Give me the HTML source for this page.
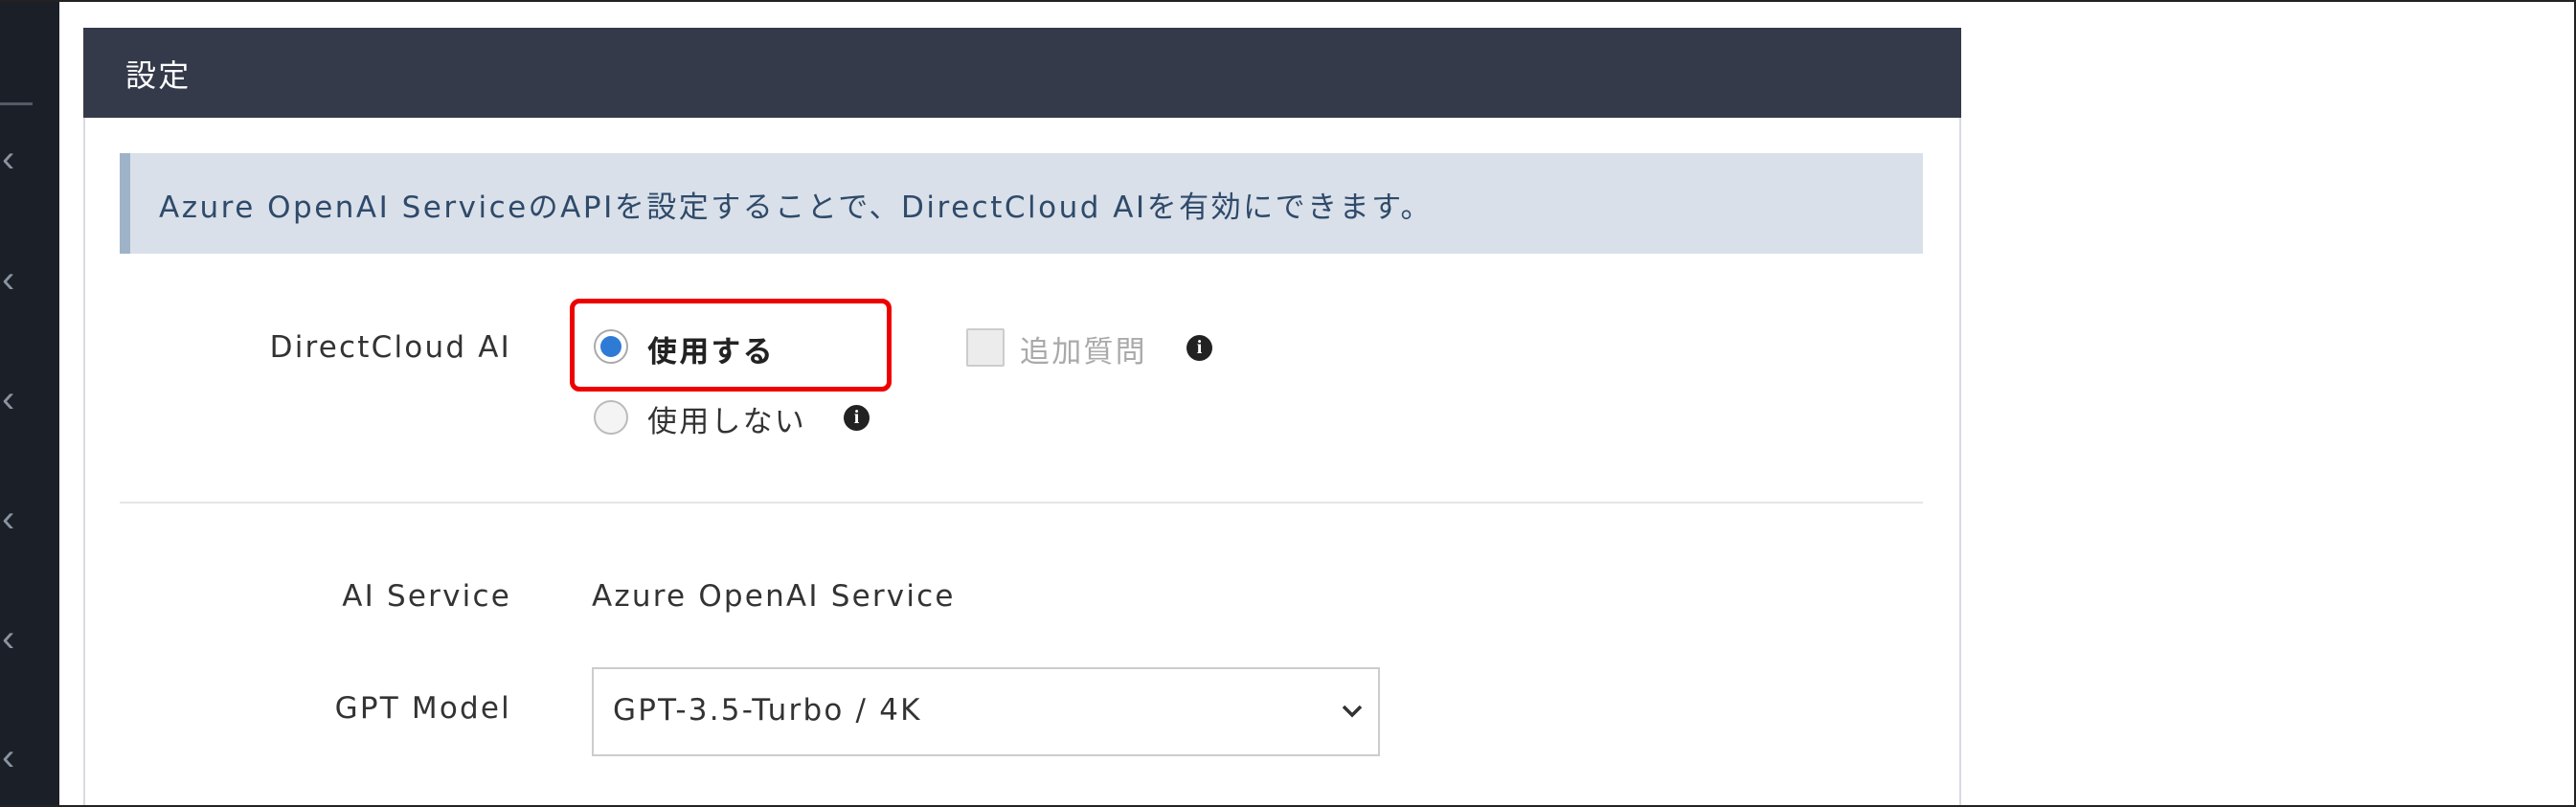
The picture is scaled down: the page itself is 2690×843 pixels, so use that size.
<!DOCTYPE html>
<html><head><meta charset="utf-8"><style>
*{margin:0;padding:0;box-sizing:border-box}
body{width:2690px;height:843px;overflow:hidden;background:#fff;position:relative;font-family:"DejaVu Sans","Noto Sans CJK JP",sans-serif;color:#333;font-size:31px;letter-spacing:2.2px}
.a{position:absolute}
.frame{left:0;top:0;width:2690px;height:843px;border:2px solid #222;border-left:none;z-index:10}
.side{left:0;top:0;width:62px;height:843px;background:#1b1f27}
.chev{left:2px;color:#8a93a0;font-size:40px;line-height:40px;font-family:"Liberation Sans",sans-serif}
.panel{left:87px;top:29px;width:1961px;height:814px;border:2px solid #d8dbe0;border-top:none;border-bottom:none}
.head{left:87px;top:29px;width:1961px;height:94px;background:#343a4a;color:#fff;font-size:32px;padding:25px 0 0 44px}
.info{left:125px;top:160px;width:1883px;height:105px;background:#d9e0e9;border-left:11px solid #9fb3c8;color:#2f4a6a;padding:31px 0 0 30px;font-size:31px;letter-spacing:2.5px;white-space:nowrap}
.lbl{width:300px;text-align:right;left:234px}
.radio{width:36px;height:36px;border-radius:50%;border:2px solid #bbb;background:#f4f4f4}
.icon{width:27px;height:27px;border-radius:50%;background:#222;color:#fff;font:bold 20px/27px "Liberation Serif",serif;text-align:center;letter-spacing:0}
</style></head><body>
<div class="a side"></div>
<div class="a" style="left:0;top:107px;width:34px;height:3px;background:#555b66"></div>
<div class="a chev" style="top:146px">‹</div>
<div class="a chev" style="top:272px">‹</div>
<div class="a chev" style="top:397px">‹</div>
<div class="a chev" style="top:522px">‹</div>
<div class="a chev" style="top:647px">‹</div>
<div class="a chev" style="top:771px">‹</div>
<div class="a panel"></div>
<div class="a head">設定</div>
<div class="a info">Azure OpenAI ServiceのAPIを設定することで、DirectCloud AIを有効にできます。</div>
<div class="a lbl" style="top:345px">DirectCloud AI</div>
<div class="a" style="left:595px;top:312px;width:336px;height:97px;border:5px solid #e00;border-radius:10px"></div>
<div class="a radio" style="left:620px;top:344px;border-color:#aaa;background:#fff"><div style="margin:5px;width:22px;height:22px;border-radius:50%;background:#2e7bd6"></div></div>
<div class="a" style="left:676px;top:342px;font-weight:bold;color:#222">使用する</div>
<div class="a" style="left:1009px;top:343px;width:40px;height:40px;border:2px solid #ccc;background:#ececec;border-radius:2px"></div>
<div class="a" style="left:1065px;top:342px;color:#aaa">追加質問</div>
<div class="a icon" style="left:1239px;top:350px">i</div>
<div class="a radio" style="left:620px;top:418px"></div>
<div class="a" style="left:676px;top:415px">使用しない</div>
<div class="a icon" style="left:881px;top:423px">i</div>
<div class="a" style="left:125px;top:524px;width:1883px;height:2px;background:#e6e6e6"></div>
<div class="a lbl" style="top:605px">AI Service</div>
<div class="a" style="left:618px;top:605px">Azure OpenAI Service</div>
<div class="a lbl" style="top:722px">GPT Model</div>
<div class="a" style="left:618px;top:697px;width:823px;height:93px;border:2px solid #ccc;padding:25px 0 0 20px">GPT-3.5-Turbo / 4K</div>
<svg class="a" style="left:1400px;top:733px" width="24" height="20"><path d="M3 5 L12 14 L21 5" stroke="#333" stroke-width="3.5" fill="none"/></svg>
<div class="a frame"></div>
</body></html>
